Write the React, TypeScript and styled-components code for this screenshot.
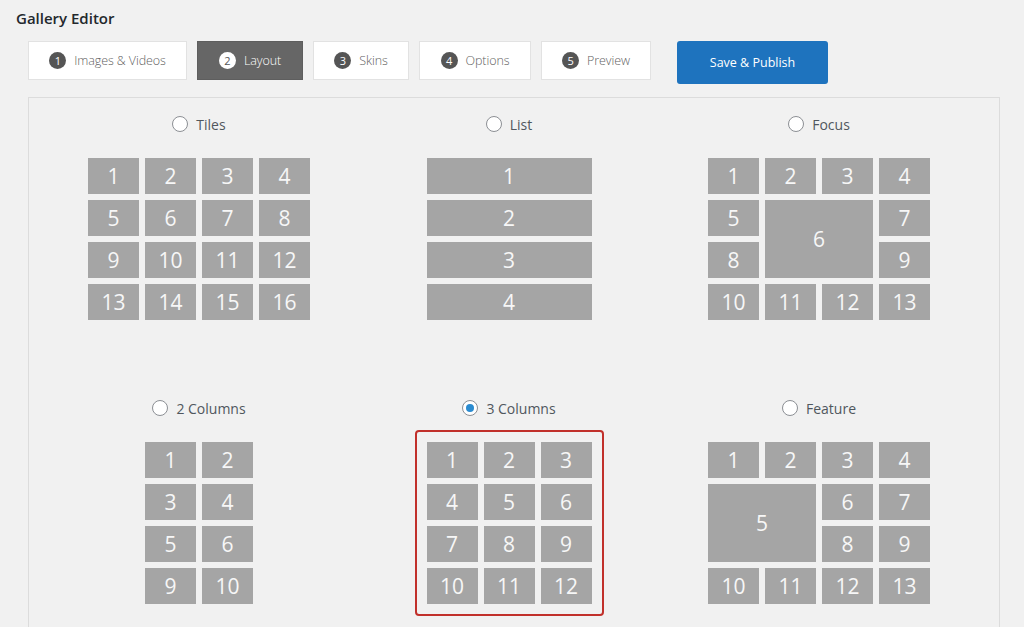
import React from "react";
import styled, { createGlobalStyle } from "styled-components";

const Global = createGlobalStyle`
  html, body { margin: 0; padding: 0; background: #f1f1f1; }
  body { font-family: "Open Sans", "Noto Sans", Arial, sans-serif; color: #444; }
`;

const Page = styled.div`
  padding: 6px 0 0 16px;
  height: 627px;
  overflow: hidden;
  box-sizing: border-box;
`;

const Title = styled.h1`
  margin: 0;
  font-size: 15px;
  font-weight: 600;
  color: #23282d;
  line-height: 24px;
`;

const TabBar = styled.div`
  display: flex;
  align-items: flex-start;
  gap: 10px;
  margin: 11px 0 0 12px;
`;

const Tab = styled.div<{ $active?: boolean; $w: number }>`
  box-sizing: border-box;
  width: ${(p) => p.$w}px;
  height: 39px;
  display: flex;
  align-items: center;
  justify-content: center;
  gap: 8px;
  background: ${(p) => (p.$active ? "#666666" : "#ffffff")};
  border: 1px solid ${(p) => (p.$active ? "#5e5e5e" : "#e2e2e2")};
  color: ${(p) => (p.$active ? "#ffffff" : "#5f5f5f")};
  font-size: 12.5px;
  font-weight: 300;
  letter-spacing: -0.1px;
`;

const StepNum = styled.span<{ $active?: boolean }>`
  width: 17px;
  height: 17px;
  border-radius: 50%;
  background: ${(p) => (p.$active ? "#ffffff" : "#555555")};
  color: ${(p) => (p.$active ? "#555555" : "#ffffff")};
  font-size: 11px;
  font-weight: 400;
  display: flex;
  align-items: center;
  justify-content: center;
  line-height: 1;
`;

const SaveButton = styled.button`
  margin-left: 16px;
  width: 151px;
  height: 43px;
  border: none;
  border-radius: 3px;
  background: #1e73be;
  color: #ffffff;
  font-family: "Open Sans", "Noto Sans", Arial, sans-serif;
  font-size: 12.5px;
  font-weight: 400;
  cursor: pointer;
`;

const Panel = styled.div`
  margin: 13px 0 0 12px;
  width: 972px;
  box-sizing: border-box;
  border: 1px solid #dcdcdc;
  border-bottom: none;
  background: #f1f1f1;
  padding: 15px 0 40px 15px;
  display: grid;
  grid-template-columns: repeat(3, 310px);
  row-gap: 65px;
`;

const Option = styled.div`
  display: flex;
  flex-direction: column;
  align-items: center;
`;

const OptionLabel = styled.label`
  display: flex;
  align-items: center;
  gap: 8px;
  height: 22px;
  font-size: 14px;
  color: #50575e;
`;

const Radio = styled.span<{ $checked?: boolean }>`
  box-sizing: border-box;
  width: 16px;
  height: 16px;
  border-radius: 50%;
  border: 1px solid #8c8f94;
  background: #ffffff;
  display: flex;
  align-items: center;
  justify-content: center;
  &::after {
    content: "";
    width: 8px;
    height: 8px;
    border-radius: 50%;
    background: ${(p) => (p.$checked ? "#2a8bd0" : "transparent")};
  }
`;

const Frame = styled.div<{ $selected?: boolean }>`
  margin-top: 11px;
  padding: 10px;
  border: 2px solid ${(p) => (p.$selected ? "#c1302b" : "transparent")};
  border-radius: 4px;
`;

const Grid = styled.div<{ $cols: number }>`
  display: grid;
  grid-template-columns: repeat(${(p) => p.$cols}, 51px);
  grid-auto-rows: 36px;
  gap: 6px;
`;

const ListGrid = styled(Grid)`
  grid-template-columns: 165px;
`;

const Cell = styled.div<{ $col?: string; $row?: string }>`
  background: #a5a5a5;
  color: #f7f7f7;
  font-size: 21px;
  font-weight: 400;
  display: flex;
  align-items: center;
  justify-content: center;
  ${(p) => (p.$col ? `grid-column: ${p.$col};` : "")}
  ${(p) => (p.$row ? `grid-row: ${p.$row};` : "")}
`;

type CellSpec = { n: number; col?: string; row?: string };

type Layout = {
  name: string;
  cols: number;
  cells: CellSpec[];
  checked?: boolean;
};

const range = (a: number, b: number): CellSpec[] =>
  Array.from({ length: b - a + 1 }, (_, i) => ({ n: a + i }));

const layouts: Layout[] = [
  { name: "Tiles", cols: 4, cells: range(1, 16) },
  { name: "List", cols: 1, cells: range(1, 4) },
  {
    name: "Focus",
    cols: 4,
    cells: [...range(1, 5), { n: 6, col: "2 / 4", row: "2 / 4" }, ...range(7, 13)],
  },
  { name: "2 Columns", cols: 2, cells: [...range(1, 6), ...range(9, 10)] },
  { name: "3 Columns", cols: 3, cells: range(1, 12), checked: true },
  {
    name: "Feature",
    cols: 4,
    cells: [...range(1, 4), { n: 5, col: "1 / 3", row: "2 / 4" }, ...range(6, 13)],
  },
];

const tabs = [
  { n: 1, label: "Images & Videos", w: 159 },
  { n: 2, label: "Layout", w: 106, active: true },
  { n: 3, label: "Skins", w: 96 },
  { n: 4, label: "Options", w: 112 },
  { n: 5, label: "Preview", w: 110 },
];

export default function App() {
  return (
    <>
      <Global />
      <Page>
        <Title>Gallery Editor</Title>
        <TabBar>
          {tabs.map((t) => (
            <Tab key={t.n} $active={t.active} $w={t.w}>
              <StepNum $active={t.active}>{t.n}</StepNum>
              {t.label}
            </Tab>
          ))}
          <SaveButton>Save &amp; Publish</SaveButton>
        </TabBar>
        <Panel>
          {layouts.map((l) => {
            const G = l.cols === 1 ? ListGrid : Grid;
            return (
              <Option key={l.name}>
                <OptionLabel>
                  <Radio $checked={l.checked} />
                  {l.name}
                </OptionLabel>
                <Frame $selected={l.checked}>
                  <G $cols={l.cols}>
                    {l.cells.map((c) => (
                      <Cell key={c.n} $col={c.col} $row={c.row}>
                        {c.n}
                      </Cell>
                    ))}
                  </G>
                </Frame>
              </Option>
            );
          })}
        </Panel>
      </Page>
    </>
  );
}
